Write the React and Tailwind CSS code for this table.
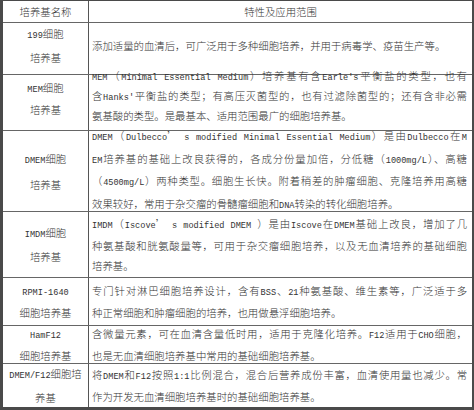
import React from 'react';

// 培养基表格

const rows = [
  {
    h: 'h-[52px]',
    lc: 'leading-[22px] pb-[6px]',
    rc: 'leading-[19.5px] pb-[6px]',
    left: ['199细胞', '培养基'],
    right: ['添加适量的血清后，可广泛用于多种细胞培养，并用于病毒学、疫苗生产等。'],
  },
  {
    h: 'h-[56px]',
    lc: 'leading-[19px] pb-[8px]',
    rc: 'leading-[18px] pb-[13px]',
    left: ['MEM细胞', '培养基'],
    right: [
      'MEM（Minimal Essential Medium）培养基有含Earle\'s平衡盐的类型，也有',
      '含Hanks\'平衡盐的类型；有高压灭菌型的，也有过滤除菌型的；还有含非必需',
      '氨基酸的类型。是最基本、适用范围最广的细胞培养基。',
    ],
  },
  {
    h: 'h-[81px]',
    lc: 'leading-[23px]',
    rc: 'leading-[19.5px]',
    left: ['DMEM细胞', '培养基'],
    right: [
      'DMEM（Dulbecco’ s modified Minimal Essential Medium）是由Dulbecco在M',
      'EM培养基的基础上改良获得的，各成分份量加倍，分低糖（1000mg/L）、高糖',
      '（4500mg/L）两种类型。细胞生长快。附着稍差的肿瘤细胞、克隆培养用高糖',
      '效果较好，常用于杂交瘤的骨髓瘤细胞和DNA转染的转化细胞培养。',
    ],
  },
  {
    h: 'h-[66px]',
    lc: 'leading-[21px]',
    rc: 'leading-[19.5px]',
    left: ['IMDM细胞', '培养基'],
    right: [
      'IMDM（Iscove’ s modified DMEM ）是由Iscove在DMEM基础上改良，增加了几',
      '种氨基酸和胱氨酸量等，可用于杂交瘤细胞培养，以及无血清培养的基础细胞',
      '培养基。',
    ],
  },
  {
    h: 'h-[48px]',
    lc: 'leading-[20px]',
    rc: 'leading-[19.5px]',
    left: ['RPMI-1640', '细胞培养基'],
    right: [
      '专门针对淋巴细胞培养设计，含有BSS、21种氨基酸、维生素等，广泛适于多',
      '种正常细胞和肿瘤细胞的培养，也用做悬浮细胞培养。',
    ],
  },
  {
    h: 'h-[38px]',
    lc: 'leading-[19px]',
    rc: 'leading-[19px]',
    left: ['HamF12', '细胞培养基'],
    right: [
      '含微量元素，可在血清含量低时用，适用于克隆化培养。F12适用于CHO细胞，',
      '也是无血清细胞培养基中常用的基础细胞培养基。',
    ],
  },
  {
    h: 'h-[43px]',
    lc: 'leading-[21px]',
    rc: 'leading-[20px]',
    left: ['DMEM/F12细胞培', '养基'],
    right: [
      '将DMEM和F12按照1:1比例混合，混合后营养成份丰富，血清使用量也减少。常',
      '作为开发无血清细胞培养基时的基础细胞培养基。',
    ],
  },
];

// latin runs get a half-width mono face, like SimSun's ascii
const Txt = ({ s }) =>
  s.split(/([\x20-\x7e]+)/).map((part, i) =>
    /^[\x20-\x7e]+$/.test(part) ? (
      <span key={i} className="font-['Liberation_Mono',monospace] text-[8.6px]">
        {part}
      </span>
    ) : (
      part
    )
  );

export default function App() {
  return (
    <div className="w-[474px] h-[410px] bg-white">
      <div className="flex flex-col h-[410px] border-l-[3px] border-t border-r-2 border-b-[3px] border-[#4a4a4a] text-[10.4px] font-light text-[#333] font-['Noto_Sans_CJK_SC',sans-serif]">
        <div className="flex h-[22px] border-b border-[#666]">
          <div className="w-[86px] shrink-0 border-r border-[#555] flex items-center justify-center">
            培养基名称
          </div>
          <div className="flex-1 flex items-center justify-center">特性及应用范围</div>
        </div>
        {rows.map((r, i) => (
          <div
            key={i}
            className={`flex ${r.h} ${i < rows.length - 1 ? 'border-b border-[#666]' : ''}`}
          >
            <div
              className={`w-[86px] shrink-0 border-r border-[#555] flex flex-col items-center justify-center whitespace-nowrap ${r.lc}`}
            >
              {r.left.map((l, j) => (
                <div key={j}>
                  <Txt s={l} />
                </div>
              ))}
            </div>
            <div className={`flex-1 flex flex-col justify-center pl-[3px] pr-[5px] whitespace-nowrap ${r.rc}`}>
              {r.right.map((l, j) => (
                <div
                  key={j}
                  className={j < r.right.length - 1 ? 'text-justify [text-align-last:justify]' : ''}
                >
                  <Txt s={l} />
                </div>
              ))}
            </div>
          </div>
        ))}
      </div>
    </div>
  );
}
